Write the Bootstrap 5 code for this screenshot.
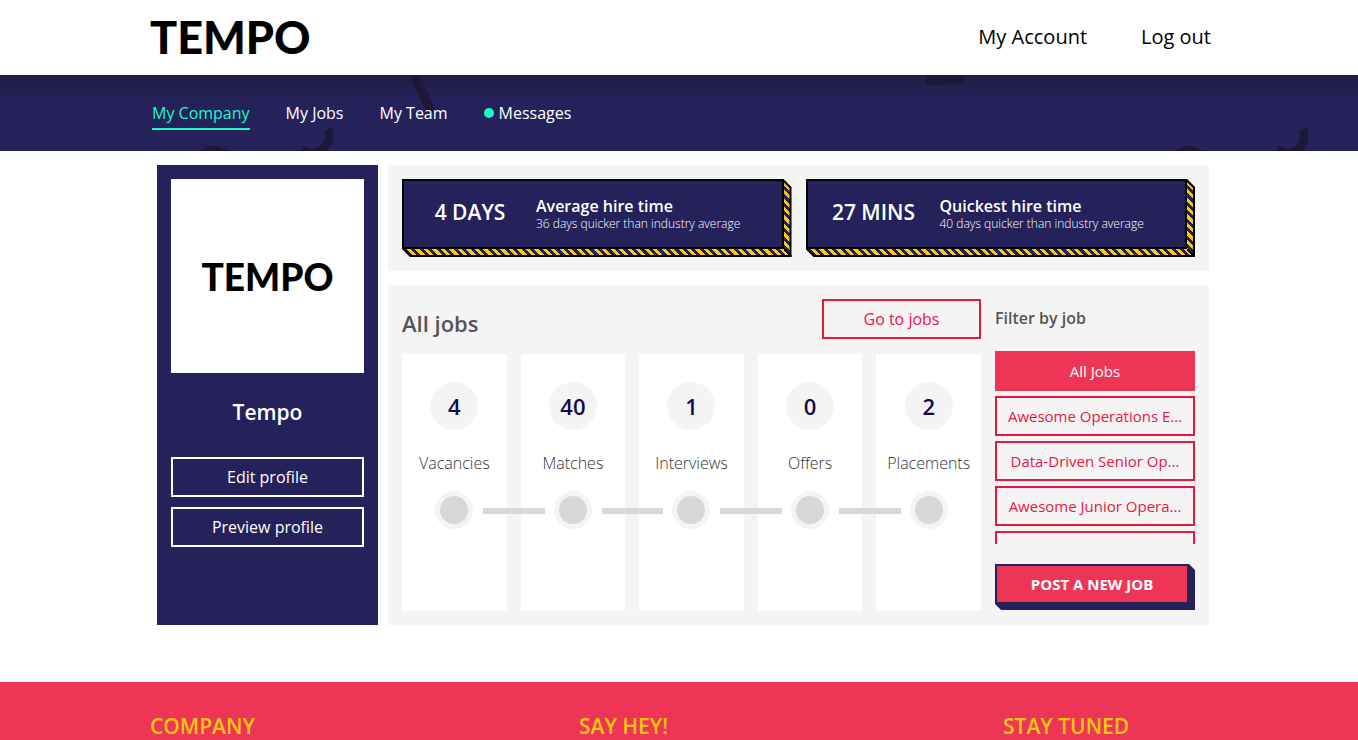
<!DOCTYPE html>
<html lang="en">
<head>
<meta charset="utf-8">
<meta name="viewport" content="width=device-width, initial-scale=1">
<title>Tempo – My Company</title>
<link rel="stylesheet" href="https://cdn.jsdelivr.net/npm/bootstrap@5.3.0/dist/css/bootstrap.min.css">
<style>
  :root { --navy: #25215b; --pink: #ef3556; --crimson: #e8173f; --mint: #19fbc5; --yellow: #fec80e; --panel: #f4f4f4; --ink: #555; }
  body { font-family: "Open Sans", sans-serif; font-size: 16px; line-height: 24px; color: var(--ink); background: #fff; }
  a { text-decoration: none; }
  .wide { max-width: 1064px; padding-left: 3px; }
  .main-area { max-width: 1060px; padding: 14px 0 57px 8px; }
  .wordmark { font-family: Lato, sans-serif; font-weight: 900; color: #000; line-height: 1; }
  .wordmark-lg { font-size: 45px; }
  .wordmark-md { font-size: 37px; }
  .site-head { min-height: 75px; }
  .account-nav { gap: 54px; font-size: 20px; padding-bottom: 2px; }
  .account-nav a { color: #000; }
  .sub-head { min-height: 76px; background: linear-gradient(rgba(20,20,30,.3), rgba(20,20,30,0) 28px), var(--navy); }
  .sub-art { inset: 0; width: 100%; height: 100%; }
  .sub-nav { gap: 36px; padding-left: 2px; }
  .sub-nav a { color: #fff; padding: 4px 0 3px; border-bottom: 2px solid transparent; }
  .sub-nav a.active { color: var(--mint); border-color: var(--mint); }
  .dot { width: 10px; height: 10px; background: var(--mint); margin-right: 5px; }
  .outer-gap { gap: 10px; }
  .inner-gap { gap: 14px; }
  .side { width: 221px; padding: 14px; background: var(--navy); color: #fff; }
  .logo-box { height: 194px; background: #fff; }
  .side h1 { font-size: 21px; line-height: 30px; font-weight: 600; margin: 24px 0 30px; }
  .line-btn { display: block; width: 100%; height: 40px; flex: none; padding: 0 4px; border: 2px solid; border-radius: 0; font-size: 16px; line-height: 34px; white-space: nowrap; }
  .line-btn.light { color: #fff; border-color: #fff; }
  .line-btn.pink { color: var(--crimson); border-color: var(--crimson); }
  .line-btn.pink.active { color: #fff; background: var(--pink); border-color: var(--pink); }
  .panel { background: var(--panel); padding: 14px; }
  .block-3d { position: relative; background: #000; padding: 0 8px 8px 0;
    clip-path: polygon(0 0, calc(100% - 8px) 0, 100% 8px, 100% 100%, 8px 100%, 0 calc(100% - 8px)); }
  .stripes::before { content: ""; position: absolute; inset: 2px;
    background: repeating-linear-gradient(45deg, var(--yellow) 0 3px, var(--navy) 3px 6px);
    clip-path: polygon(0 0, calc(100% - 7px) 0, 100% 7px, 100% 100%, 7px 100%, 0 calc(100% - 7px)); }
  .stripes::after { content: ""; position: absolute; right: 0; bottom: 0; width: 8px; height: 8px;
    background: linear-gradient(45deg, transparent 40%, #000 40% 60%, transparent 60%); }
  .stat-face { position: relative; height: 70px; background: var(--navy); color: #fff; border: 2px solid #000; }
  .stat-num { width: 132px; font-size: 21px; font-weight: 600; padding-bottom: 4px; }
  .stat-name { font-size: 16px; line-height: 20px; font-weight: 600; }
  .stat-note { font-size: 12px; line-height: 16px; font-weight: 300; }
  .jobs h2 { font-size: 22px; line-height: 30px; font-weight: 600; margin: 9px 0 0; }
  .jobs-main { gap: 15px; }
  .go-btn { width: 159px; }
  .stage { position: relative; background: #fff; min-height: 257px; padding-top: 28px; }
  .count { width: 48px; height: 48px; background: var(--panel); color: #14094b; font-size: 22px; font-weight: 600; }
  .stage-name { font-weight: 300; color: #333; margin: 21px 0 16px; }
  .node { width: 38px; height: 38px; border: 5px solid var(--panel); background: #d8d8d8; }
  .stage:not(:last-child)::after { content: ""; position: absolute; z-index: 1; top: 154px; height: 6px; left: calc(50% + 29px); width: calc(100% - 43px); background: #d8d8d8; }
  .filter { width: 200px; }
  .filter h3 { font-size: 16px; line-height: 24px; font-weight: 600; margin: 7px 0 21px; }
  .filter-list { gap: 5px; height: 193px; overflow: hidden; }
  .filter-list .line-btn { font-size: 15px; }
  .post-btn { width: 200px; margin-top: 20px; border: 0; background: var(--navy); padding: 0 6px 6px 0;
    clip-path: polygon(0 0, calc(100% - 6px) 0, 100% 6px, 100% 100%, 6px 100%, 0 calc(100% - 6px)); }
  .post-btn span { height: 40px; background: var(--pink); border: 2px solid var(--navy); color: #fff; font-size: 15px; font-weight: 700; }
  .foot { background: var(--pink); padding: 29px 0 24px; }
  .foot h4 { color: var(--yellow); font-size: 21px; line-height: 30px; font-weight: 600; margin: 0; }
  .foot-cols { display: grid; grid-template-columns: 429px 424px 1fr; }
</style>
</head>
<body>
<header class="site-head d-flex align-items-center">
  <div class="wide container-fluid pe-0 d-flex justify-content-between align-items-center">
    <a href="#" class="wordmark wordmark-lg">TEMPO</a>
    <nav class="account-nav d-flex" aria-label="Account">
      <a href="#">My Account</a>
      <a href="#">Log out</a>
    </nav>
  </div>
</header>

<div class="sub-head position-relative d-flex align-items-center">
  <svg class="sub-art position-absolute" preserveAspectRatio="xMidYMin slice" viewBox="0 0 1358 76" aria-hidden="true">
    <g fill="none" stroke="#1d1738">
      <path d="M415 2 L432 38" stroke-width="9"/>
      <path d="M328 54 A17 17 0 0 1 302 74" stroke-width="8"/>
      <path d="M201 81 Q213 69 228 81" stroke-width="8"/>
      <path d="M1303 54 A17 17 0 0 1 1277 74" stroke-width="8"/>
      <path d="M1176 81 Q1188 69 1203 81" stroke-width="8"/>
    </g>
    <path d="M926 0h37v9l-37 1z" fill="#1d1738"/>
  </svg>
  <div class="wide container-fluid position-relative">
    <nav class="sub-nav d-flex" aria-label="Company">
      <a href="#" class="active">My Company</a>
      <a href="#">My Jobs</a>
      <a href="#">My Team</a>
      <a href="#" class="d-flex align-items-center"><span class="dot rounded-circle"></span>Messages</a>
    </nav>
  </div>
</div>

<main class="main-area container-fluid d-flex outer-gap">
  <aside class="side flex-shrink-0 text-center">
    <div class="logo-box d-flex align-items-center justify-content-center"><span class="wordmark wordmark-md">TEMPO</span></div>
    <h1>Tempo</h1>
    <div class="d-flex flex-column outer-gap">
      <button type="button" class="btn line-btn light">Edit profile</button>
      <button type="button" class="btn line-btn light">Preview profile</button>
    </div>
  </aside>

  <div class="flex-grow-1 d-flex flex-column inner-gap">
    <section class="panel d-flex inner-gap">
      <div class="block-3d stripes flex-fill w-50">
        <div class="stat-face d-flex align-items-center">
          <div class="stat-num text-center">4 DAYS</div>
          <div>
            <div class="stat-name">Average hire time</div>
            <div class="stat-note">36 days quicker than industry average</div>
          </div>
        </div>
      </div>
      <div class="block-3d stripes flex-fill w-50">
        <div class="stat-face d-flex align-items-center">
          <div class="stat-num text-center">27 MINS</div>
          <div>
            <div class="stat-name">Quickest hire time</div>
            <div class="stat-note">40 days quicker than industry average</div>
          </div>
        </div>
      </div>
    </section>

    <section class="panel jobs d-flex inner-gap">
      <div class="jobs-main flex-grow-1 d-flex flex-column">
        <div class="d-flex justify-content-between">
          <h2>All jobs</h2>
          <button type="button" class="btn line-btn pink go-btn">Go to jobs</button>
        </div>
        <div class="d-flex inner-gap">
          <div class="stage col d-flex flex-column align-items-center">
            <div class="count rounded-circle d-flex align-items-center justify-content-center">4</div>
            <div class="stage-name">Vacancies</div>
            <div class="node rounded-circle"></div>
          </div>
          <div class="stage col d-flex flex-column align-items-center">
            <div class="count rounded-circle d-flex align-items-center justify-content-center">40</div>
            <div class="stage-name">Matches</div>
            <div class="node rounded-circle"></div>
          </div>
          <div class="stage col d-flex flex-column align-items-center">
            <div class="count rounded-circle d-flex align-items-center justify-content-center">1</div>
            <div class="stage-name">Interviews</div>
            <div class="node rounded-circle"></div>
          </div>
          <div class="stage col d-flex flex-column align-items-center">
            <div class="count rounded-circle d-flex align-items-center justify-content-center">0</div>
            <div class="stage-name">Offers</div>
            <div class="node rounded-circle"></div>
          </div>
          <div class="stage col d-flex flex-column align-items-center">
            <div class="count rounded-circle d-flex align-items-center justify-content-center">2</div>
            <div class="stage-name">Placements</div>
            <div class="node rounded-circle"></div>
          </div>
        </div>
      </div>

      <div class="filter flex-shrink-0">
        <h3>Filter by job</h3>
        <div class="filter-list d-flex flex-column">
          <button type="button" class="btn line-btn pink active">All Jobs</button>
          <button type="button" class="btn line-btn pink">Awesome Operations E...</button>
          <button type="button" class="btn line-btn pink">Data-Driven Senior Op...</button>
          <button type="button" class="btn line-btn pink">Awesome Junior Opera...</button>
          <button type="button" class="btn line-btn pink" aria-label="More jobs"></button>
        </div>
        <button type="button" class="post-btn"><span class="d-flex align-items-center justify-content-center">POST A NEW JOB</span></button>
      </div>
    </section>
  </div>
</main>

<footer class="foot">
  <div class="wide container-fluid pe-0 foot-cols">
    <h4>COMPANY</h4>
    <h4>SAY HEY!</h4>
    <h4>STAY TUNED</h4>
  </div>
</footer>
<script src="https://cdn.jsdelivr.net/npm/bootstrap@5.3.0/dist/js/bootstrap.bundle.min.js"></script>
</body>
</html>
